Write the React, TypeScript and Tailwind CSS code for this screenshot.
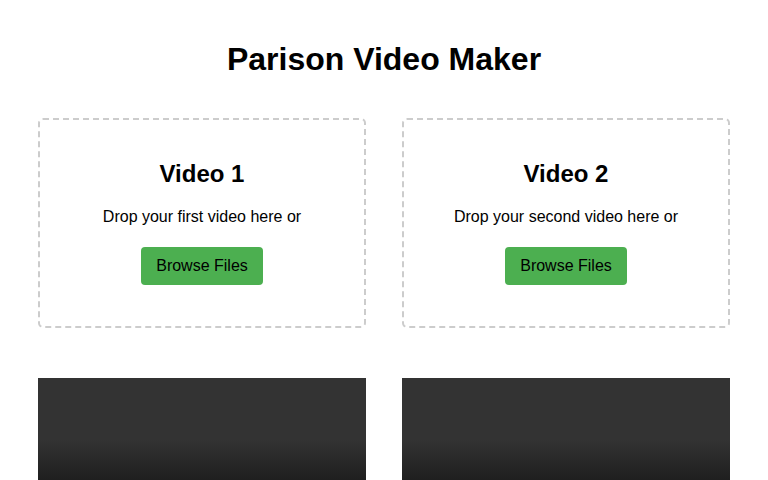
export default function App() {
  const videos = [
    { title: "Video 1", hint: "Drop your first video here or" },
    { title: "Video 2", hint: "Drop your second video here or" },
  ];

  return (
    <main className="min-h-screen bg-white px-[38px] pt-[41px] font-['Liberation_Sans',Arial,sans-serif] text-black">
      <h1 className="text-center text-[32px] font-bold leading-[37px]">
        Parison Video Maker
      </h1>

      <div className="mt-[40px] grid grid-cols-2 gap-[36px]">
        {videos.map((v) => (
          <div
            key={v.title}
            className="flex h-[210px] flex-col items-center rounded-[5px] border-2 border-dashed border-[#cccccc] pt-[40px]"
          >
            <h2 className="text-[24px] font-bold leading-[28px]">{v.title}</h2>
            <p className="mt-[20px] text-[16px] leading-[18px]">{v.hint}</p>
            <button className="mt-[21px] h-[38px] rounded bg-[#4caf50] px-[15px] text-[16px] text-black">
              Browse Files
            </button>
          </div>
        ))}
      </div>

      <div className="mt-[50px] grid grid-cols-2 gap-[36px]">
        <div className="h-[102px] bg-gradient-to-b from-[#333333] from-60% to-[#1f1f1f]" />
        <div className="h-[102px] bg-gradient-to-b from-[#333333] from-60% to-[#1f1f1f]" />
      </div>
    </main>
  );
}
